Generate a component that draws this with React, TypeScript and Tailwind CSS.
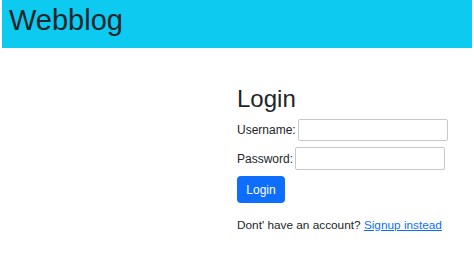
export default function App() {
  return (
    <div className="min-h-[278px] bg-white text-[#212529] font-['Liberation_Sans',Arial,sans-serif]">
      {/* Header */}
      <header className="mx-[2px] h-[48px] bg-[#0dcaf0] pl-[7px] pt-[2px]">
        <h1 className="text-[29px] leading-[36px]">Webblog</h1>
      </header>

      {/* Login form */}
      <main className="pl-[237px] pt-[36px]">
        <h2 className="text-[24px] leading-[29px]">Login</h2>
        <form className="mt-[6px] flex flex-col text-[12px]">
          <label className="flex items-center gap-[2px] h-[22px]">
            <span>Username:</span>
            <input type="text" className="w-[150px] h-[22px] border border-[#c8c8c8] rounded-[2px]" />
          </label>
          <label className="mt-[6px] flex items-center gap-[2px] h-[23px]">
            <span>Password:</span>
            <input type="password" className="w-[150px] h-[23px] border border-[#c8c8c8] rounded-[2px]" />
          </label>
          <div className="mt-[6px]">
            <button type="button" className="h-[27px] w-[48px] rounded-[4px] bg-[#0d6efd] text-white text-[12px]">
              Login
            </button>
          </div>
          <p className="mt-[13px] leading-[18px] text-[11.8px]">
            Dont' have an account?{' '}
            <a href="#" className="text-[#0d6efd] underline">Signup instead</a>
          </p>
        </form>
      </main>
    </div>
  )
}
